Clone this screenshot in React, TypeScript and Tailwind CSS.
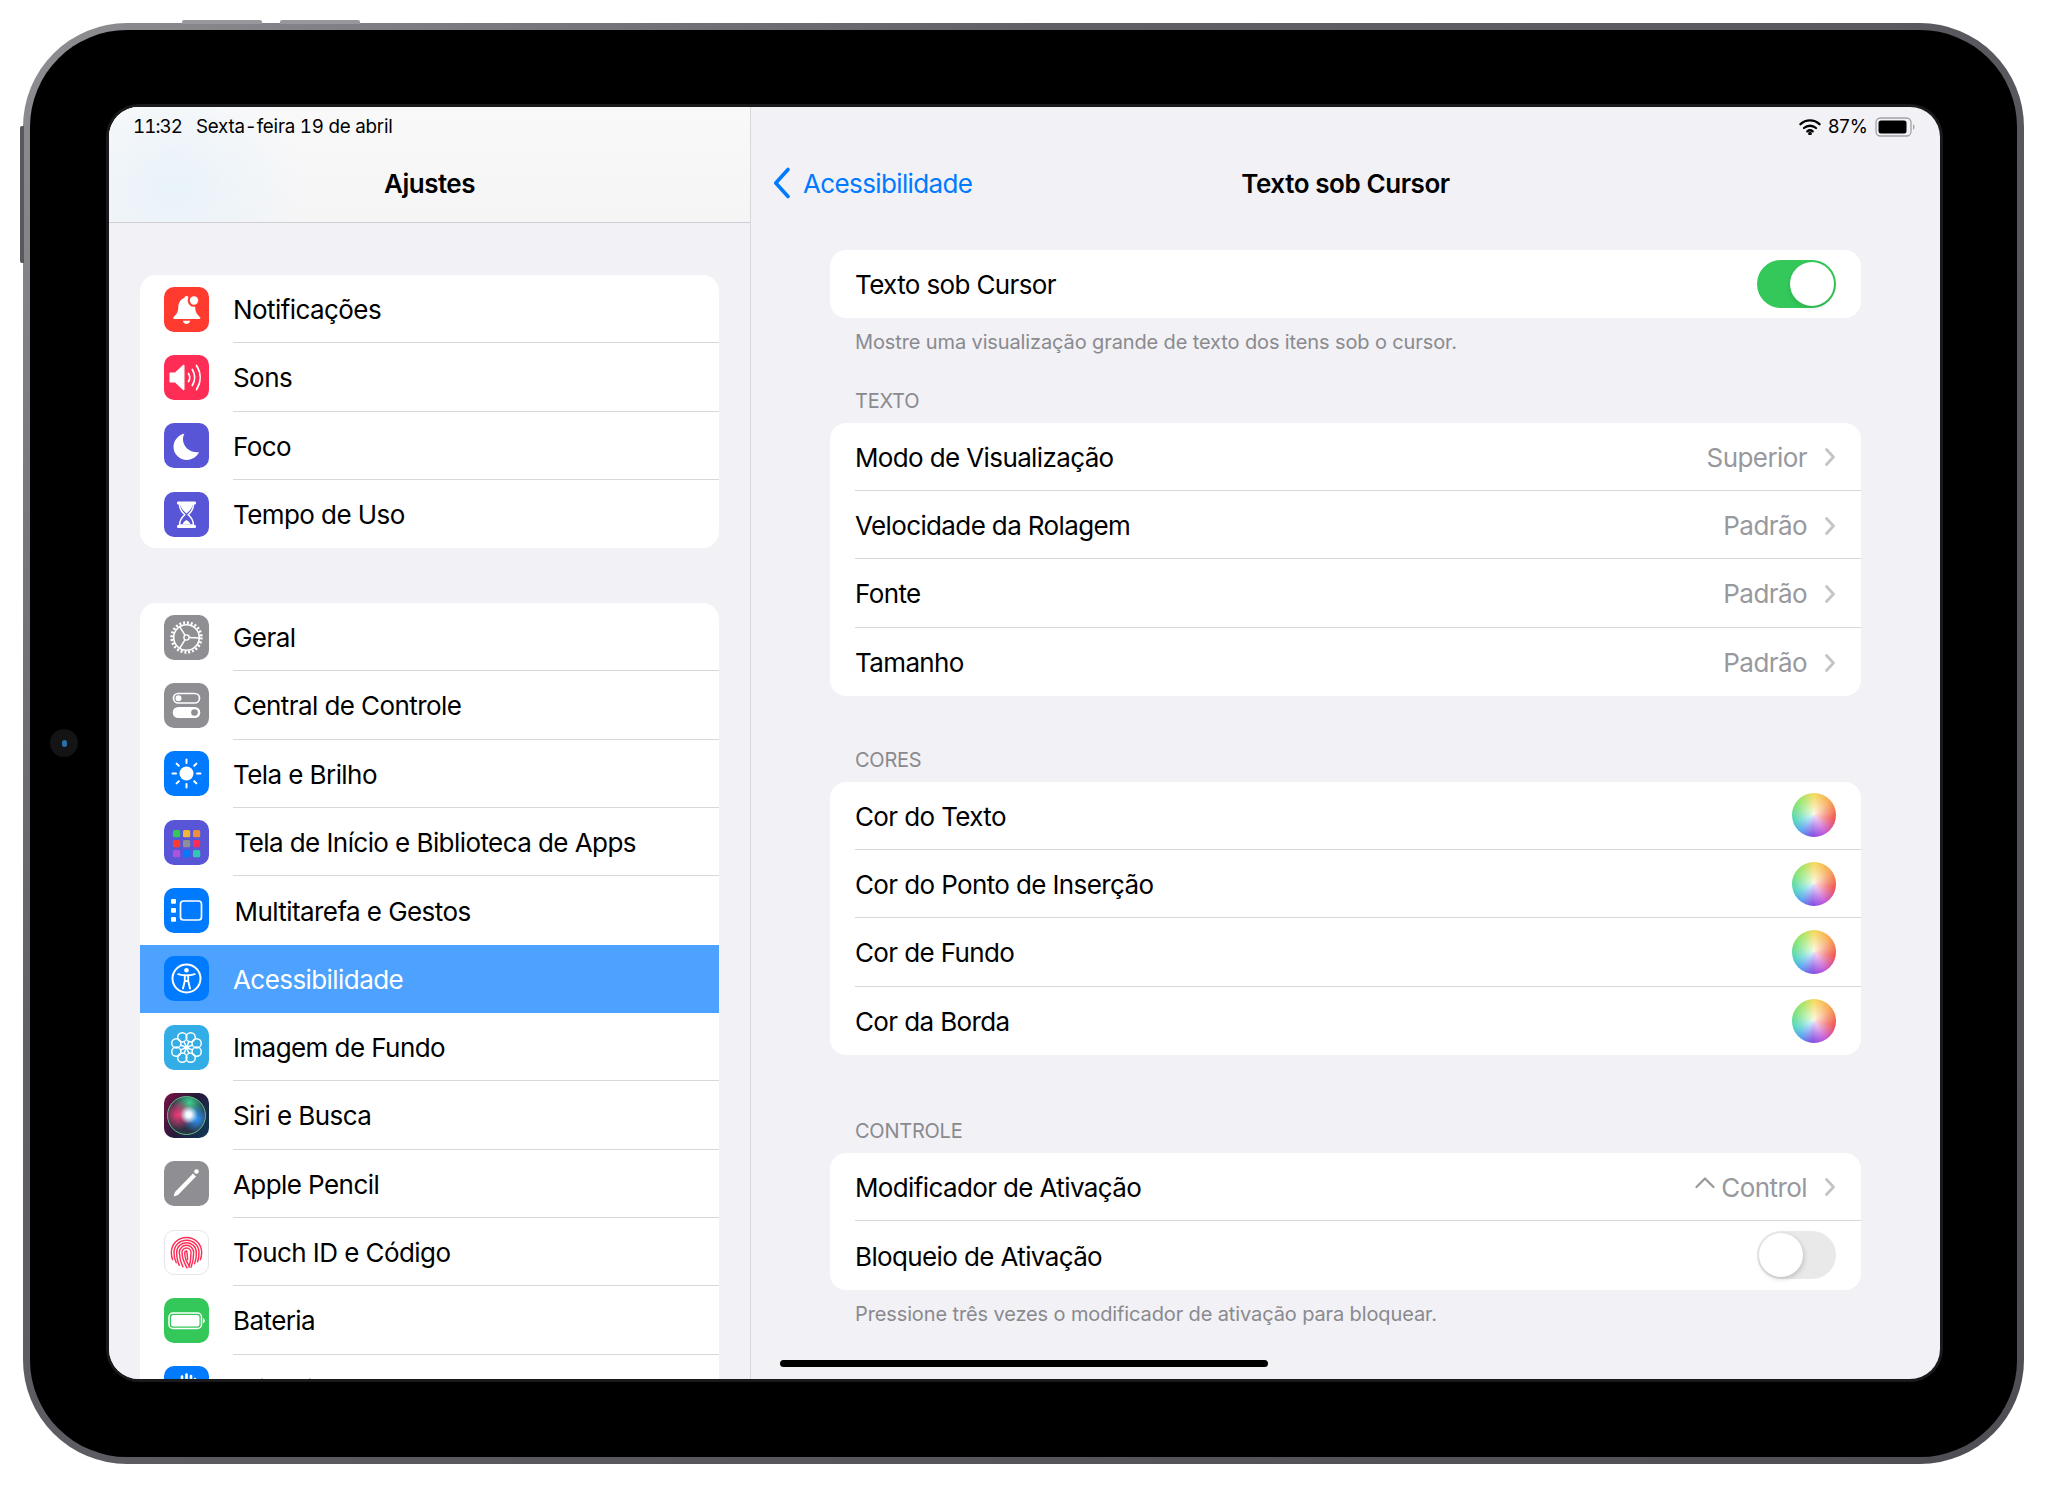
import React from "react";

const ICON = "w-[45px] h-[45px] rounded-[10px] shrink-0";

function Svg({ children, bg }: { children: React.ReactNode; bg: string }) {
  return (
    <div className={`${ICON} ${bg}`}>
      <svg viewBox="0 0 45 45" className="w-full h-full block">
        {children}
      </svg>
    </div>
  );
}

const BellIcon = () => (
  <Svg bg="bg-[#ff3b30]">
    <path d="M22.500 9c1.300 0 2 .9 2.100 2 4.400 1.100 6.600 4.900 6.600 9.500 0 4.300 1.700 6.800 4.800 9.800.9.9.3 1.700-.7 1.700H10.200c-1 0-1.600-.8-.7-1.700 3.100-3 4.800-5.500 4.800-9.800 0-4.600 2.200-8.400 6.100-9.500.1-1.100.8-2 2.100-2z" fill="#fff" />
    <circle cx="30" cy="13.500" r="6.300" fill="#ff3b30" />
    <circle cx="30" cy="13.500" r="4.200" fill="#fff" />
    <path d="M18.800 33.800h7.400c-.3 2-1.800 3.200-3.700 3.200s-3.400-1.200-3.700-3.200z" fill="#fff" />
  </Svg>
);

const SoundIcon = () => (
  <Svg bg="bg-[#ff2d55]">
    <path d="M6.500 17.500h4.500l8-7.500c.7-.6 1.500-.2 1.500.7v23.600c0 .9-.8 1.300-1.500.7l-8-7.500H6.500c-.6 0-1-.4-1-1v-8c0-.6.4-1 1-1z" fill="#fff" />
    <g fill="none" stroke="#fff" strokeWidth="1.700" strokeLinecap="round">
      <path d="M24.500 18.500c1.600 2.500 1.600 5.500 0 8" />
      <path d="M28.300 14.500c3 5 3 11 0 16" />
      <path d="M32.500 10.500c4.800 7.500 4.800 16.500 0 24" />
    </g>
  </Svg>
);

const MoonIcon = () => (
  <Svg bg="bg-[#5856d6]">
    <path d="M20.500 10.500c-1 1.700-1.500 3.700-1.500 5.800 0 7.200 6.200 13 14 13 .7 0 1.400-.1 2-.2C33 33.700 28.300 37 23 37c-7.500 0-13.500-5.900-13.500-13.200 0-6.300 4.600-11.700 11-13.300z" fill="#fff" />
  </Svg>
);

const HourglassIcon = () => (
  <Svg bg="bg-[#5856d6]">
    <rect x="13" y="9.500" width="19" height="3" rx="1.200" fill="#fff" />
    <rect x="13" y="33" width="19" height="3" rx="1.200" fill="#fff" />
    <path d="M15.500 12.500h14c0 4.500-1.500 7-5.300 10.300 3.800 3.300 5.300 5.700 5.300 10.200h-14c0-4.500 1.500-6.900 5.300-10.200-3.800-3.300-5.300-5.800-5.300-10.300z" fill="none" stroke="#fff" strokeWidth="1.500" />
    <path d="M16.500 13h12c-.4 3-1.900 5-6 8.500-4.100-3.500-5.600-5.500-6-8.500z" fill="#fff" />
    <path d="M22.500 28c2.200 1.300 3.400 2.600 3.900 4.300h-7.800c.5-1.700 1.700-3 3.900-4.300z" fill="#fff" />
  </Svg>
);

const GearIcon = () => {
  const spokes = [2, 122, 238];
  return (
    <Svg bg="bg-[#8e8e93]">
      <circle cx="22.500" cy="22.500" r="14.800" fill="none" stroke="#fff" strokeWidth="2.800" strokeDasharray="2 1.875" />
      <circle cx="22.500" cy="22.500" r="12.800" fill="none" stroke="#fff" strokeWidth="1.600" />
      <g stroke="#fff" strokeWidth="1.500">
        {spokes.map((a) => (
          <line
            key={a}
            x1={22.5 + 2.6 * Math.cos((a * Math.PI) / 180)}
            y1={22.5 + 2.6 * Math.sin((a * Math.PI) / 180)}
            x2={22.5 + 12.6 * Math.cos((a * Math.PI) / 180)}
            y2={22.5 + 12.6 * Math.sin((a * Math.PI) / 180)}
          />
        ))}
      </g>
      <circle cx="22.500" cy="22.500" r="2.600" fill="none" stroke="#fff" strokeWidth="1.400" />
    </Svg>
  );
};

const ControlsIcon = () => (
  <Svg bg="bg-[#8e8e93]">
    <rect x="9.500" y="10.500" width="26" height="9.500" rx="4.750" fill="none" stroke="#fff" strokeWidth="1.700" />
    <circle cx="14.500" cy="15.250" r="3" fill="#fff" />
    <rect x="8.700" y="24" width="27.600" height="11" rx="5.500" fill="#fff" />
    <circle cx="30.500" cy="29.500" r="3.300" fill="#8e8e93" />
  </Svg>
);

const SunIcon = () => (
  <Svg bg="bg-[#007aff]">
    <circle cx="22.500" cy="22.500" r="7" fill="#fff" />
    <g stroke="#fff" strokeWidth="2" strokeLinecap="round">
      <line x1="22.500" y1="8.500" x2="22.500" y2="12" />
      <line x1="22.500" y1="33" x2="22.500" y2="36.500" />
      <line x1="8.500" y1="22.500" x2="12" y2="22.500" />
      <line x1="33" y1="22.500" x2="36.500" y2="22.500" />
      <line x1="12.600" y1="12.600" x2="14.800" y2="14.800" />
      <line x1="30.200" y1="30.200" x2="32.400" y2="32.400" />
      <line x1="12.600" y1="32.400" x2="14.800" y2="30.200" />
      <line x1="30.200" y1="14.800" x2="32.400" y2="12.600" />
    </g>
  </Svg>
);

const HomeIcon = () => {
  const colors = ["#34c759", "#f2b637", "#ee8f3c", "#ff3b30", "#8e8e93", "#ff2d55", "#af52de", "#007aff", "#30c7b5"];
  return (
    <Svg bg="bg-[#5856d6]">
      {colors.map((c, i) => (
        <rect key={i} x={9 + (i % 3) * 10} y={10 + Math.floor(i / 3) * 10} width="7.200" height="7.200" rx="1.500" fill={c} />
      ))}
    </Svg>
  );
};

const MultitaskIcon = () => (
  <Svg bg="bg-[#007aff]">
    <rect x="7" y="11" width="5" height="4.700" rx="1" fill="#fff" />
    <rect x="7" y="20" width="5" height="4.700" rx="1" fill="#fff" />
    <rect x="7" y="29" width="5" height="4.700" rx="1" fill="#fff" />
    <rect x="16.500" y="13" width="21" height="19" rx="3" fill="none" stroke="#fff" strokeWidth="1.700" />
  </Svg>
);

const AccessIcon = () => (
  <Svg bg="bg-[#007aff]">
    <circle cx="22.500" cy="22.500" r="14" fill="none" stroke="#fff" strokeWidth="2" />
    <circle cx="22.500" cy="14.300" r="2.300" fill="#fff" />
    <path d="M14.200 18.200c2.800.8 5.500 1.200 8.300 1.200s5.500-.4 8.300-1.200" fill="none" stroke="#fff" strokeWidth="1.800" strokeLinecap="round" />
    <path d="M20.800 19.500v5.500l-1.800 7.500M24.200 19.500v5.500l1.800 7.500M20.800 25h3.400" fill="none" stroke="#fff" strokeWidth="1.900" strokeLinecap="round" />
  </Svg>
);

const FlowerIcon = () => {
  const petals = [0, 45, 90, 135, 180, 225, 270, 315];
  return (
    <Svg bg="bg-[#32ade6]">
      <g fill="none" stroke="#fff" strokeWidth="1.500">
        {petals.map((a) => (
          <circle
            key={a}
            cx={22.5 + 11 * Math.cos(((a + 22.5) * Math.PI) / 180)}
            cy={22.5 + 11 * Math.sin(((a + 22.5) * Math.PI) / 180)}
            r="4.600"
          />
        ))}
        {petals.map((a) => (
          <line key={a} x1="22.500" y1="22.500" x2={22.5 + 7 * Math.cos(((a + 22.5) * Math.PI) / 180)} y2={22.5 + 7 * Math.sin(((a + 22.5) * Math.PI) / 180)} />
        ))}
      </g>
      <circle cx="22.500" cy="22.500" r="2.300" fill="#fff" />
    </Svg>
  );
};

const SiriIcon = () => (
  <div className={`${ICON} bg-[linear-gradient(120deg,#7a1045_0%,#241a3a_50%,#0f3a58_100%)] flex items-center justify-center`}>
    <div className="w-[39px] h-[39px] rounded-full border border-[#5fc08a] bg-[image:radial-gradient(circle_at_56%_48%,#ffffff_0%,#e8f6ff_10%,rgba(120,200,255,0)_32%),radial-gradient(circle_at_28%_48%,#f23c78_0%,rgba(232,56,111,0)_46%),radial-gradient(circle_at_76%_58%,#2f9bff_0%,rgba(47,155,255,0)_40%),radial-gradient(circle_at_58%_16%,#3fd090_0%,rgba(63,191,136,0)_42%),linear-gradient(#2a3244,#2a3244)]" />
  </div>
);

const PencilIcon = () => (
  <Svg bg="bg-[#8e8e93]">
    <path d="M9.500 35.500l1.500-4.500L29 12.500l3 3-18 18.500z" fill="#fff" />
    <circle cx="32.500" cy="10.500" r="2.300" fill="#fff" />
  </Svg>
);

const TouchIcon = () => (
  <div className={`${ICON} bg-white border-[1.5px] border-[#e6e6ea]`}>
    <svg viewBox="0 0 42 42" className="w-full h-full block" fill="none" stroke="#ff2d55" strokeWidth="1.400" strokeLinecap="round">
      <path d="M7.500 28c-1-2-1.300-4.500-1.300-7C6.200 12.700 12.800 6.300 21 6.300S35.800 12.700 35.800 21c0 2.500-.3 5-1.300 7" />
      <path d="M11 31c-1.600-3-2.200-6.500-2.200-10 0-6.700 5.400-12 12.200-12s12.200 5.300 12.200 12c0 2.800-.3 6-1.400 9" />
      <path d="M14 33.500c-1.800-3.500-2.600-8-2.600-12.500 0-5.300 4.300-9.500 9.600-9.500s9.600 4.200 9.600 9.500c0 4-.5 8-1.900 11" />
      <path d="M17.500 35c-2-4-3.500-9-3.500-14 0-3.900 3.100-7 7-7s7 3.100 7 7c0 5-.8 10-2.500 14.500" />
      <path d="M21.500 36c-2.500-4.500-4.900-9.500-4.900-15 0-2.400 2-4.400 4.400-4.400s4.400 2 4.400 4.400c0 5.500-.5 10-2 14.500" />
      <path d="M21 19.500c-.9 0-1.700.7-1.700 1.600 0 4.500 1.700 9.400 4 12.400" />
      <path d="M21.200 19.700c.7 3 .7 6 .9 8.300" />
    </svg>
  </div>
);

const BatteryIcon = () => (
  <Svg bg="bg-[#34c759]">
    <rect x="5" y="15" width="32.500" height="15.500" rx="4" fill="none" stroke="#fff" strokeWidth="1.500" />
    <rect x="7" y="17" width="28.500" height="11.500" rx="2.500" fill="#fff" />
    <path d="M39 20.200c1.200.3 1.800 1.300 1.800 2.500s-.6 2.200-1.800 2.500z" fill="#fff" />
  </Svg>
);

const HandIcon = () => (
  <Svg bg="bg-[#007aff]">
    <g stroke="#fff" strokeWidth="2.600" strokeLinecap="round" fill="none">
      <line x1="18" y1="10.500" x2="18" y2="22" />
      <line x1="22.500" y1="8.500" x2="22.500" y2="22" />
      <line x1="27" y1="10" x2="27" y2="22" />
      <line x1="31" y1="13" x2="31" y2="24" />
    </g>
    <path d="M16.500 20h16v8c0 5-3.500 8-8 8-3.500 0-5.500-1.500-7-4l-5-7c-1-2 1-3 2.500-1.500l1.500 2z" fill="#fff" />
  </Svg>
);

type SideRow = { label: string; icon: React.ReactNode; nudge?: boolean; selected?: boolean };

const GROUP_ONE: SideRow[] = [
  { label: "Notificações", icon: <BellIcon /> },
  { label: "Sons", icon: <SoundIcon /> },
  { label: "Foco", icon: <MoonIcon /> },
  { label: "Tempo de Uso", icon: <HourglassIcon /> },
];

const GROUP_TWO: SideRow[] = [
  { label: "Geral", icon: <GearIcon /> },
  { label: "Central de Controle", icon: <ControlsIcon /> },
  { label: "Tela e Brilho", icon: <SunIcon /> },
  { label: "Tela de Início e Biblioteca de Apps", icon: <HomeIcon />, nudge: true },
  { label: "Multitarefa e Gestos", icon: <MultitaskIcon />, nudge: true },
  { label: "Acessibilidade", icon: <AccessIcon />, selected: true },
  { label: "Imagem de Fundo", icon: <FlowerIcon /> },
  { label: "Siri e Busca", icon: <SiriIcon /> },
  { label: "Apple Pencil", icon: <PencilIcon /> },
  { label: "Touch ID e Código", icon: <TouchIcon /> },
  { label: "Bateria", icon: <BatteryIcon /> },
  { label: "Privacidade e Segurança", icon: <HandIcon /> },
];

function SideGroup({ rows, clip }: { rows: SideRow[]; clip?: boolean }) {
  return (
    <div className={`bg-white ${clip ? "rounded-t-[16px]" : "rounded-[16px]"} overflow-hidden`}>
      {rows.map((row, i) => {
        const last = i === rows.length - 1;
        const noLine = last || row.selected || rows[i + 1]?.selected;
        return (
          <div key={row.label} className={`h-[68.33px] flex items-center pl-[24px] ${row.selected ? "bg-[#4da2ff]" : ""}`}>
            {row.icon}
            <div
              className={`flex-1 h-full flex items-center ml-[24px] pt-[1.500px] text-[26px] tracking-[-0.022em] ${row.selected ? "text-white" : "text-black"} ${
                noLine ? "" : "border-b-[1.5px] border-[#d8d8dc]"
              } ${row.nudge ? "pl-[1.500px]" : ""}`}
            >
              {row.label}
            </div>
          </div>
        );
      })}
    </div>
  );
}

const Chevron = () => (
  <svg width="12" height="20" viewBox="0 0 12 20" fill="none" stroke="#c4c4c7" strokeWidth="2.800" strokeLinecap="round" strokeLinejoin="round">
    <path d="M2.500 2.500L9.500 10l-7 7.500" />
  </svg>
);

const ColorWell = () => (
  <div className="w-[44px] h-[44px] rounded-full bg-[image:radial-gradient(circle_at_50%_48%,rgba(255,255,255,0.85)_0%,rgba(255,255,255,0.35)_42%,rgba(255,255,255,0)_75%),conic-gradient(#f5d548_0deg,#f59a40_50deg,#f0453f_100deg,#c04fd8_150deg,#7a45e0_185deg,#4a9cf0_220deg,#3fd0c0_250deg,#6fe06a_295deg,#a5e050_330deg,#f5d548_360deg)]" />
);

const Toggle = ({ on }: { on: boolean }) =>
  on ? (
    <div className="w-[79px] h-[48px] rounded-full bg-[#34c759] flex items-center justify-end pr-[2px]">
      <div className="w-[44px] h-[44px] rounded-full bg-white shadow-[0_2px_4px_rgba(0,0,0,0.12)]" />
    </div>
  ) : (
    <div className="w-[79px] h-[48px] rounded-full bg-[#e9e9ea] flex items-center justify-start pl-[2px]">
      <div className="w-[44px] h-[44px] rounded-full bg-white shadow-[1px_2px_5px_rgba(0,0,0,0.18)]" />
    </div>
  );

function Row({ label, right, last }: { label: string; right: React.ReactNode; last?: boolean }) {
  return (
    <div className="h-[68.33px] pl-[25px]">
      <div className={`h-full flex items-center justify-between pr-[25px] ${last ? "" : "border-b-[1.5px] border-[#d8d8dc]"}`}>
        <span className="pt-[1.500px] text-[26px] tracking-[-0.024em] text-black">{label}</span>
        {right}
      </div>
    </div>
  );
}

const Value = ({ text, caret }: { text: string; caret?: boolean }) => (
  <div className="flex items-center gap-[17px] pt-[1.500px]">
    <span className="flex items-center gap-[6px] text-[26px] tracking-[-0.022em] text-[#98989d]">
      {caret && (
        <svg width="20" height="14" viewBox="0 0 20 14" fill="none" stroke="#98989d" strokeWidth="2.200" strokeLinecap="round" strokeLinejoin="round" className="-mt-[8px]">
          <path d="M1.500 11L10 2.500 18.500 11" />
        </svg>
      )}
      {text}
    </span>
    <Chevron />
  </div>
);

const Card = ({ children }: { children: React.ReactNode }) => <div className="bg-white rounded-[16px] overflow-hidden">{children}</div>;

const Note = ({ children }: { children: React.ReactNode }) => (
  <div className="h-[48px] flex items-center pl-[25px] text-[20px] tracking-[-0.006em] text-[#8a8a8e]">{children}</div>
);

const Header = ({ children, className }: { children: React.ReactNode; className: string }) => (
  <div className={`h-[44px] flex items-center pl-[25px] text-[20px] tracking-[-0.012em] text-[#8a8a8e] ${className}`}>{children}</div>
);

export default function App() {
  return (
    <div className="w-[2048px] h-[1489px] bg-white overflow-hidden pt-[23px] pl-[23px] [font-family:Inter,sans-serif]">
      {/* device */}
      <div className="relative w-[2001px] h-[1441px] rounded-[104px] p-[7px] bg-[linear-gradient(135deg,#8e8e93_0%,#5f5f65_30%,#4e4e54_100%)]">
        <div className="absolute -top-[3px] left-[159px] w-[80px] h-[4px] rounded-t-[2px] bg-[#98989c]" />
        <div className="absolute -top-[3px] left-[257px] w-[80px] h-[4px] rounded-t-[2px] bg-[#98989c]" />
        <div className="absolute -left-[3px] top-[103px] w-[4px] h-[137px] rounded-l-[2px] bg-[#58585c]" />
        <div className="w-full h-full rounded-[97px] bg-black pt-[77px] pl-[79px] pr-[77px] pb-[78px]">
          <div className="relative w-full h-full rounded-[30px] overflow-hidden flex bg-[#f1f1f6] ring-[3px] ring-[#1a1a1c]">
            {/* sidebar */}
            <div className="w-[642px] shrink-0 h-full flex flex-col border-r-[1.5px] border-[#d8d8dc] bg-[#f1f1f6]">
              <div className="h-[116px] shrink-0 border-b-[1.5px] border-[#cfcfd3] bg-[image:radial-gradient(ellipse_130px_110px_at_10%_70%,#e9f3fa_0%,rgba(247,247,248,0)_100%),linear-gradient(#f9f9fa,#f5f5f6)]">
                <div className="h-[38px] pt-[2px] flex items-center pl-[24px] text-[18.75px] tracking-[-0.012em] tabular-nums text-black">
                  <span className="w-[63px] tracking-[-0.05em]">11:32</span>
                  <span>Sexta-feira 19 de abril</span>
                </div>
                <div className="h-[76px] flex items-center justify-center text-[26px] font-semibold tracking-[-0.02em] text-black">Ajustes</div>
              </div>
              <div className="flex-1 overflow-hidden px-[31px] pt-[52px]">
                <SideGroup rows={GROUP_ONE} />
                <div className="h-[54.7px]" />
                <SideGroup rows={GROUP_TWO} clip />
              </div>
            </div>
            {/* detail */}
            <div className="flex-1 h-full flex flex-col">
              <div className="h-[38px] pt-[1px] shrink-0 flex items-center justify-end pr-[24px] gap-[7px] text-[18.5px] text-black">
                <svg width="22" height="16" viewBox="0 0 22 16" fill="none" stroke="#000" strokeWidth="2.300" strokeLinecap="round">
                  <path d="M1.500 5.200C7 .2 15 .2 20.500 5.200" />
                  <path d="M5 9c3.500-3 8.500-3 12 0" />
                  <path d="M8.300 12.400c1.600-1.300 3.800-1.300 5.400 0" />
                  <circle cx="11" cy="14.600" r="0.700" fill="#000" />
                </svg>
                <span>87%</span>
                <svg width="41" height="20" viewBox="0 0 41 20">
                  <rect x="1" y="1" width="35" height="18" rx="4.500" fill="none" stroke="#a2a2a6" strokeWidth="1.300" />
                  <rect x="3.500" y="3.500" width="28" height="13" rx="2.500" fill="#000" />
                  <path d="M38 7.500c1 .3 1.500 1.300 1.500 2.500s-.5 2.200-1.500 2.500z" fill="#a2a2a6" />
                </svg>
              </div>
              <div className="h-[76px] shrink-0 grid grid-cols-[1fr_auto_1fr] items-center pl-[22px]">
                <div className="flex items-center gap-[12px] text-[26px] tracking-[-0.024em] text-[#007aff]">
                  <svg width="18" height="32" viewBox="0 0 18 32" fill="none" stroke="#007aff" strokeWidth="3.600" strokeLinecap="round" strokeLinejoin="round">
                    <path d="M15 2.500L2.800 16 15 29.500" />
                  </svg>
                  Acessibilidade
                </div>
                <div className="text-[26px] font-semibold tracking-[-0.016em] text-black -ml-[22px]">Texto sob Cursor</div>
                <div />
              </div>
              <div className="flex-1 overflow-hidden px-[79px] pt-[28.5px]">
                <Card>
                  <Row label="Texto sob Cursor" right={<Toggle on />} last />
                </Card>
                <Note>Mostre uma visualização grande de texto dos itens sob o cursor.</Note>

                <Header className="mt-[13px]">TEXTO</Header>
                <Card>
                  <Row label="Modo de Visualização" right={<Value text="Superior" />} />
                  <Row label="Velocidade da Rolagem" right={<Value text="Padrão" />} />
                  <Row label="Fonte" right={<Value text="Padrão" />} />
                  <Row label="Tamanho" right={<Value text="Padrão" />} last />
                </Card>

                <Header className="mt-[41.500px]">CORES</Header>
                <Card>
                  <Row label="Cor do Texto" right={<ColorWell />} />
                  <Row label="Cor do Ponto de Inserção" right={<ColorWell />} />
                  <Row label="Cor de Fundo" right={<ColorWell />} />
                  <Row label="Cor da Borda" right={<ColorWell />} last />
                </Card>

                <Header className="mt-[54px]">CONTROLE</Header>
                <Card>
                  <Row label="Modificador de Ativação" right={<Value text="Control" caret />} />
                  <Row label="Bloqueio de Ativação" right={<Toggle on={false} />} last />
                </Card>
                <Note>Pressione três vezes o modificador de ativação para bloquear.</Note>
              </div>
            </div>
            {/* home indicator */}
            <div className="absolute left-[671px] top-[1253px] w-[488px] h-[7px] rounded-full bg-black" />
          </div>
        </div>
        {/* front camera */}
        <div className="absolute left-[27px] top-[706px] w-[28px] h-[28px] rounded-full bg-[#141416] flex items-center justify-center">
          <div className="w-[5px] h-[7px] rounded-full bg-[#2c6ea8]" />
        </div>
      </div>
    </div>
  );
}
